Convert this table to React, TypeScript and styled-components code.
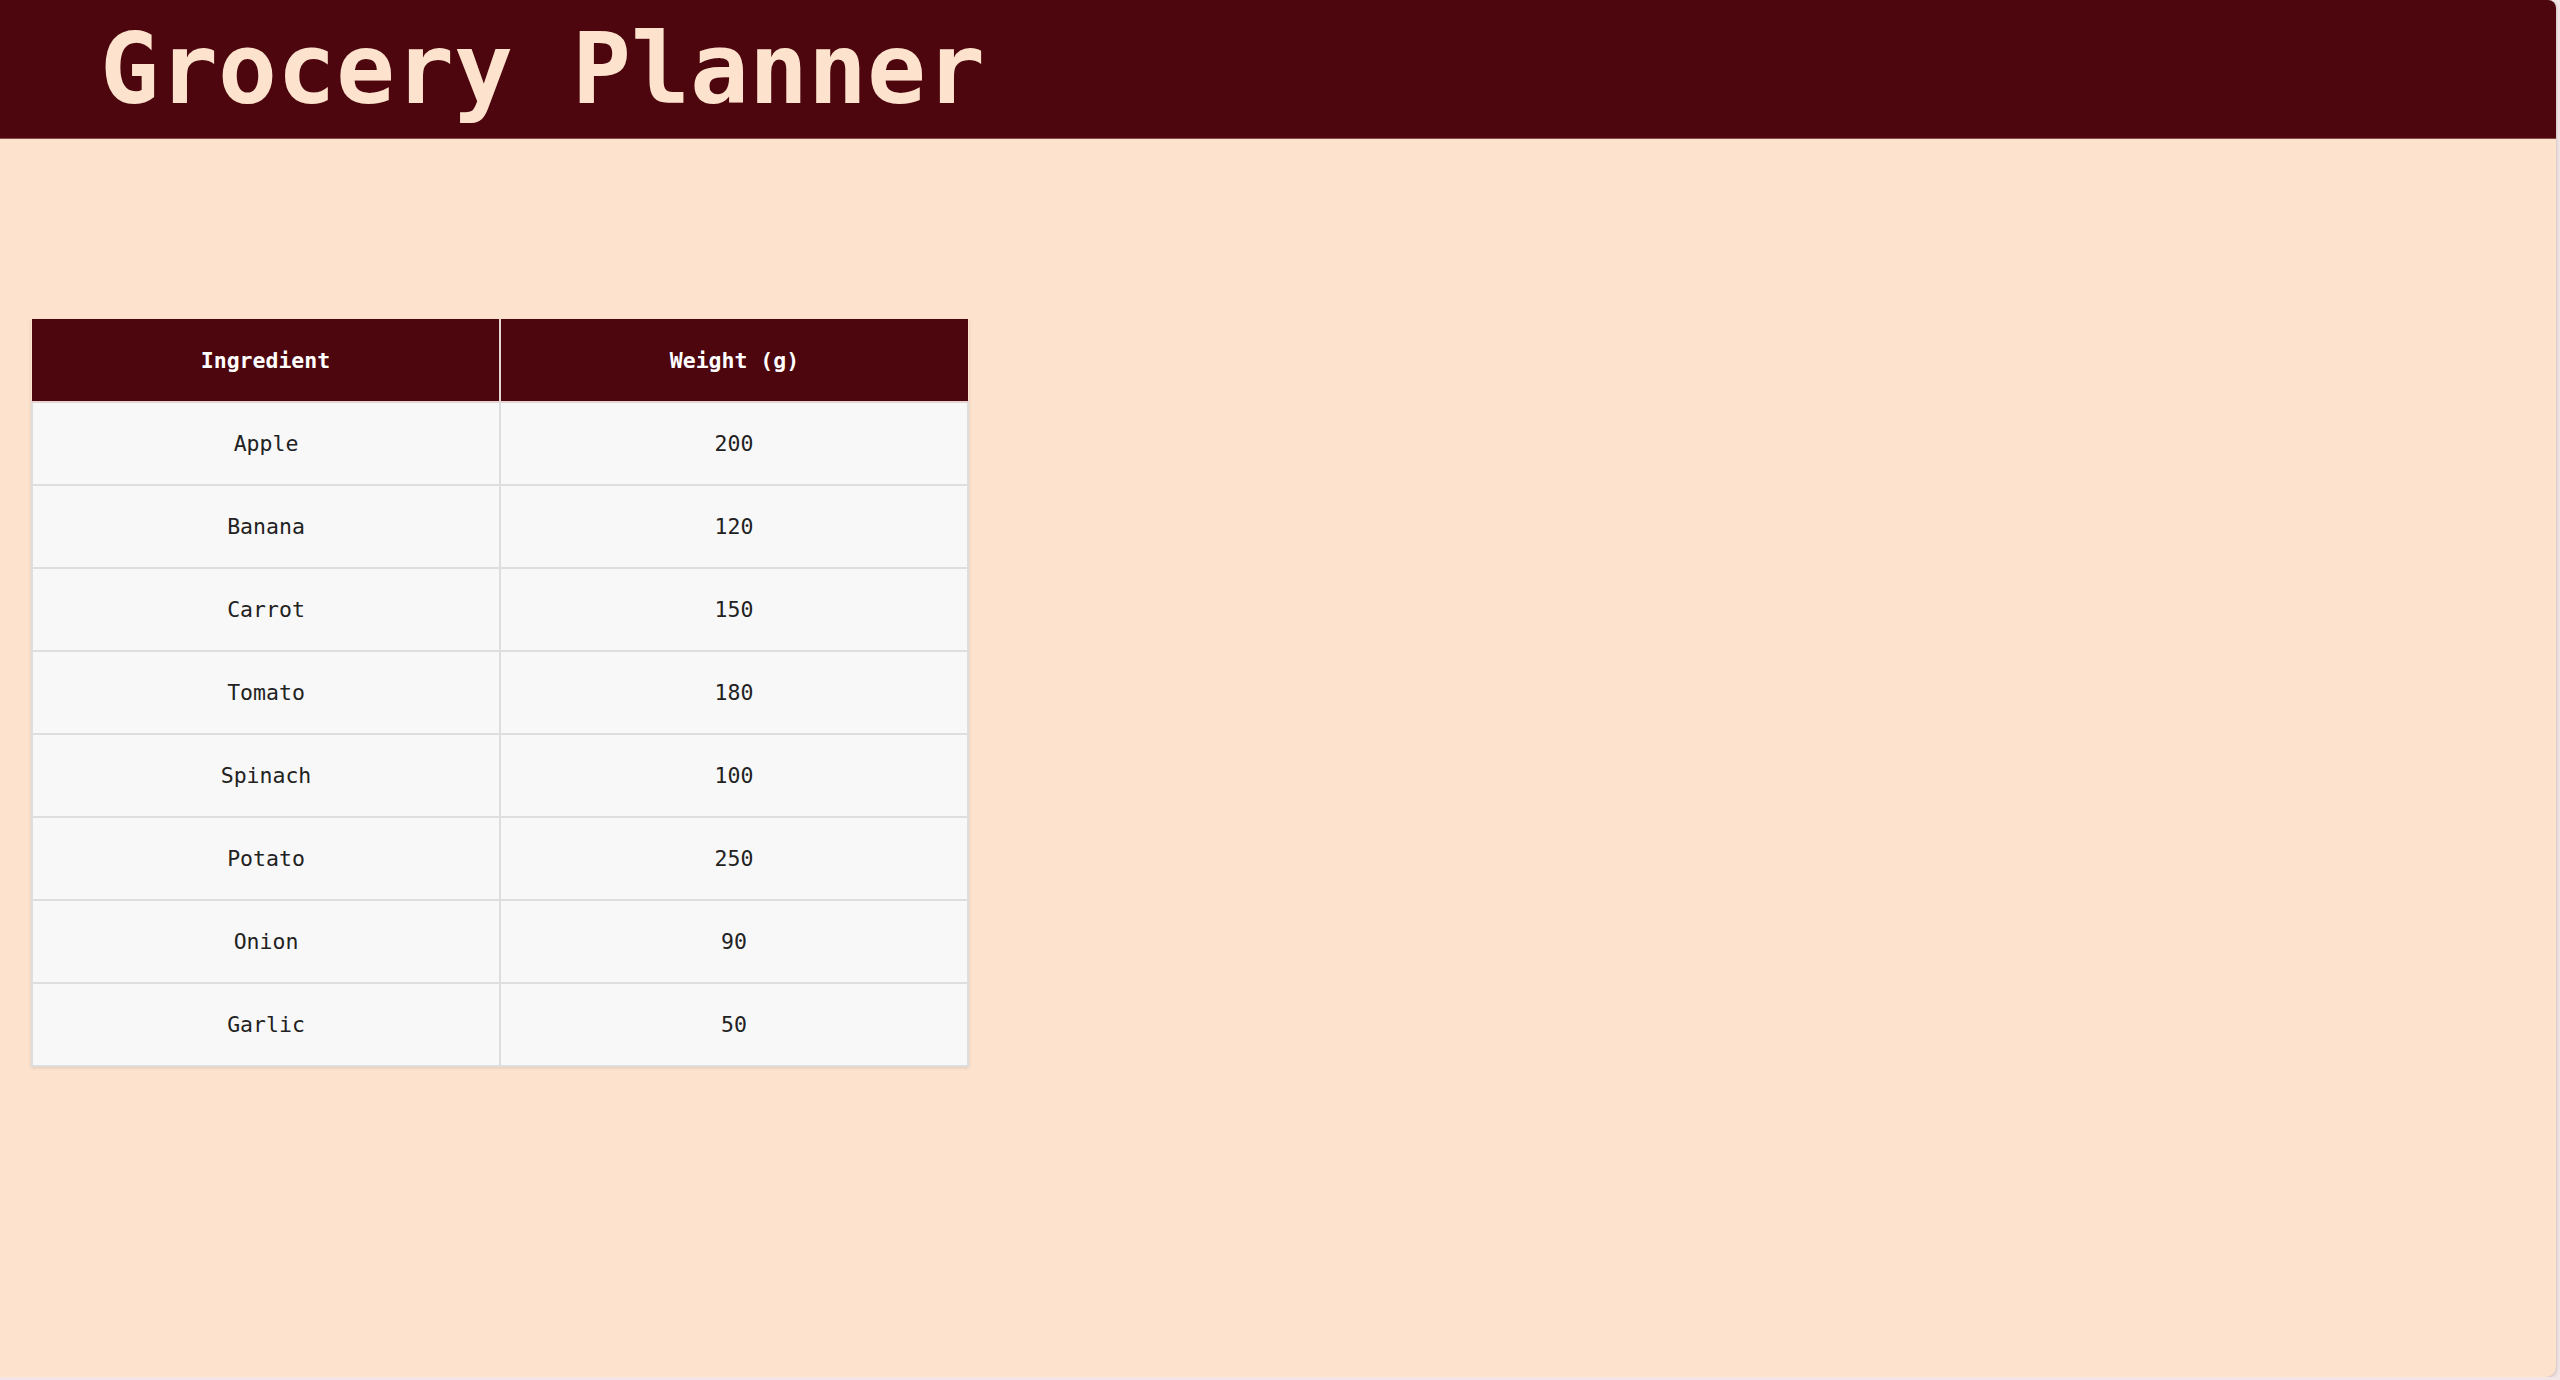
import React from "react";
import styled, { createGlobalStyle } from "styled-components";

const Global = createGlobalStyle`
  html, body { margin: 0; padding: 0; }
  body {
    background: #f2e6e6;
    font-family: "DejaVu Sans Mono", "Liberation Mono", monospace;
  }
`;

const Page = styled.div`
  width: 2556px;
  height: 1377px;
  background: #fde3ce;
  border-radius: 0 8px 10px 0;
  overflow: hidden;
  box-shadow: 1px 1px 3px rgba(120, 90, 90, 0.25);
  display: flex;
  flex-direction: column;
`;

const Header = styled.header`
  height: 139px;
  background: #4e060e;
  border-bottom: 1px solid #8a4a4a;
  display: flex;
  align-items: center;
  padding-left: 100px;
  box-sizing: border-box;
`;

const Title = styled.h1`
  margin: 0;
  font-family: "DejaVu Sans Mono", monospace;
  font-weight: bold;
  font-size: 98px;
  color: #fde3ce;
  line-height: 1;
`;

const Main = styled.main`
  padding: 180px 0 0 31px;
`;

const Table = styled.table`
  width: 938px;
  border-collapse: collapse;
  box-shadow: 0 1px 3px rgba(0, 0, 0, 0.12);
  font-family: "DejaVu Sans Mono", monospace;
  font-size: 21.5px;
`;

const Th = styled.th`
  background: #4e060e;
  color: #ffffff;
  font-weight: bold;
  height: 82px;
  border: 2px solid #e4d6d6;
  border-top: none;
  text-align: center;
  padding: 0;
  &:first-child { border-left: none; }
  &:last-child { border-right: none; }
`;

const Td = styled.td`
  background: #f8f8f8;
  color: #222;
  height: 81px;
  border: 2px solid #dedede;
  text-align: center;
  padding: 0;
`;

const rows: [string, number][] = [
  ["Apple", 200],
  ["Banana", 120],
  ["Carrot", 150],
  ["Tomato", 180],
  ["Spinach", 100],
  ["Potato", 250],
  ["Onion", 90],
  ["Garlic", 50],
];

export default function App() {
  return (
    <>
      <Global />
      <Page>
        <Header>
          <Title>Grocery Planner</Title>
        </Header>
        <Main>
          <Table>
            <thead>
              <tr>
                <Th>Ingredient</Th>
                <Th>Weight (g)</Th>
              </tr>
            </thead>
            <tbody>
              {rows.map(([name, w]) => (
                <tr key={name}>
                  <Td>{name}</Td>
                  <Td>{w}</Td>
                </tr>
              ))}
            </tbody>
          </Table>
        </Main>
      </Page>
    </>
  );
}
